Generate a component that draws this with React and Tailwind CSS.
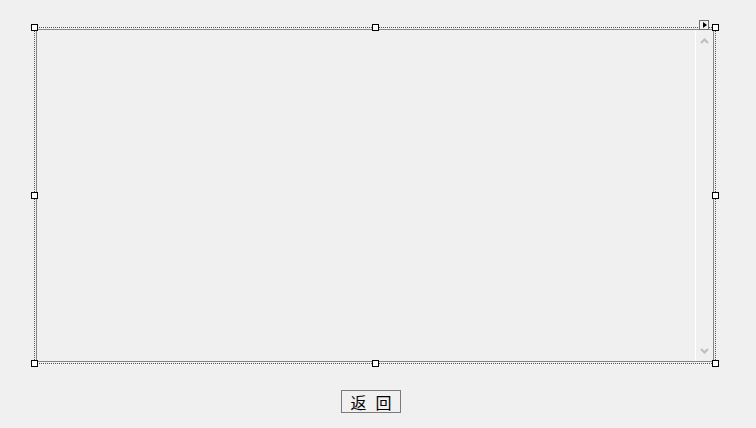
// Form designer: selected list box with grab handles and a "返回" button below

const handles = [
  "left-[31px] top-[24px]",
  "left-[372px] top-[24px]",
  "left-[712px] top-[24px]",
  "left-[31px] top-[192px]",
  "left-[712px] top-[192px]",
  "left-[31px] top-[360px]",
  "left-[372px] top-[360px]",
  "left-[712px] top-[360px]",
];

function Chevron({ up }) {
  return (
    <svg width="9" height="6" viewBox="0 0 9 6" className="block">
      <path
        d={up ? "M1 5 L4.5 1.5 L8 5" : "M1 1 L4.5 4.5 L8 1"}
        fill="none"
        stroke="#bdbdbd"
        strokeWidth="2"
      />
    </svg>
  );
}

export default function App() {
  return (
    <div
      className="relative w-[756px] h-[428px] bg-[#f0f0f0] overflow-hidden"
      style={{ fontFamily: '"Noto Sans CJK SC", "Noto Sans", sans-serif' }}
    >
      <div className="flex flex-col items-start pt-[29px] pl-[36px]">
        {/* list box */}
        <div className="flex w-[678px] h-[333px] border border-[#868686] bg-[#f0f0f0]">
          <div className="flex-1" />
          <div className="w-[18px] border-l border-white flex flex-col items-center justify-between pt-[8px] pb-[7px]">
            <Chevron up />
            <Chevron />
          </div>
        </div>

        <button className="mt-[28px] ml-[305px] w-[60px] h-[23px] border border-[#7a7a7a] bg-[#f0f0f0] flex items-center justify-center gap-[9px] text-[16px] leading-none text-black">
          <span>返</span>
          <span>回</span>
        </button>
      </div>

      {/* selection frame */}
      <div className="absolute left-[34px] top-[27px] w-[682px] h-[337px] border border-dotted border-[#555555] pointer-events-none" />

      {/* smart tag */}
      <div className="absolute left-[699px] top-[20px] w-[10px] h-[10px] border border-[#6e6e6e] bg-[#f4f4f4] flex items-center justify-center">
        <svg width="4" height="6" viewBox="0 0 4 6" className="block ml-[1px]">
          <path d="M0 0 L4 3 L0 6 Z" fill="#000" />
        </svg>
      </div>

      {handles.map((pos) => (
        <div key={pos} className={`absolute ${pos} w-[7px] h-[7px] bg-white border border-black`} />
      ))}
    </div>
  );
}
